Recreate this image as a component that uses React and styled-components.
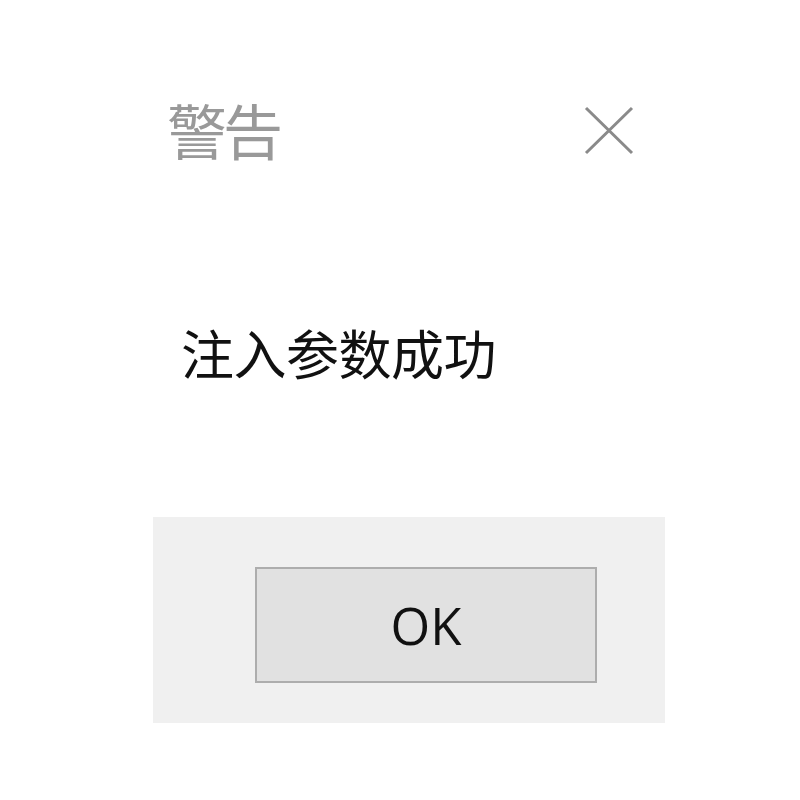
import React from "react";
import styled, { createGlobalStyle } from "styled-components";

const Global = createGlobalStyle`
  html, body { margin: 0; padding: 0; background: #ffffff; }
  body { width: 800px; height: 800px; overflow: hidden; }
`;

const Dialog = styled.div`
  width: 512px;
  margin: 0 0 0 153px;
  padding-top: 94px;
  display: flex;
  flex-direction: column;
  font-family: "Noto Sans CJK SC", "Noto Sans", sans-serif;
`;

const Header = styled.div`
  display: flex;
  align-items: center;
  justify-content: space-between;
  padding: 0 31px 0 14px;
  height: 72px;
`;

const Title = styled.div`
  font-size: 60px;
  line-height: 68px;
  color: #999999;
  letter-spacing: -4px;
  margin-top: -3px;
`;

const CloseButton = styled.button`
  width: 50px;
  height: 50px;
  padding: 0;
  border: none;
  background: transparent;
  display: flex;
  align-items: center;
  justify-content: center;
`;

const Body = styled.div`
  height: 351px;
  display: flex;
  align-items: flex-start;
  padding: 154px 0 0 28px;
  box-sizing: border-box;
`;

const Message = styled.div`
  font-size: 53px;
  line-height: 64px;
  color: #111111;
  letter-spacing: -0.5px;
`;

const Footer = styled.div`
  background: #f0f0f0;
  height: 206px;
  display: flex;
  align-items: flex-start;
  padding: 50px 0 0 102px;
  box-sizing: border-box;
`;

const OkButton = styled.button`
  width: 342px;
  height: 116px;
  box-sizing: border-box;
  background: #e1e1e1;
  border: 2px solid #adadad;
  font-family: "Open Sans", "Noto Sans", sans-serif;
  font-size: 51px;
  color: #111111;
  padding: 0;
  display: flex;
  align-items: center;
  justify-content: center;
`;

export default function App() {
  return (
    <>
      <Global />
      <Dialog>
        <Header>
          <Title>警告</Title>
          <CloseButton aria-label="close">
            <svg width="50" height="50" viewBox="0 0 50 50">
              <path d="M2 3 L48 48 M48 3 L2 48" stroke="#8a8a8a" strokeWidth="3" fill="none" />
            </svg>
          </CloseButton>
        </Header>
        <Body>
          <Message>注入参数成功</Message>
        </Body>
        <Footer>
          <OkButton>OK</OkButton>
        </Footer>
      </Dialog>
    </>
  );
}
